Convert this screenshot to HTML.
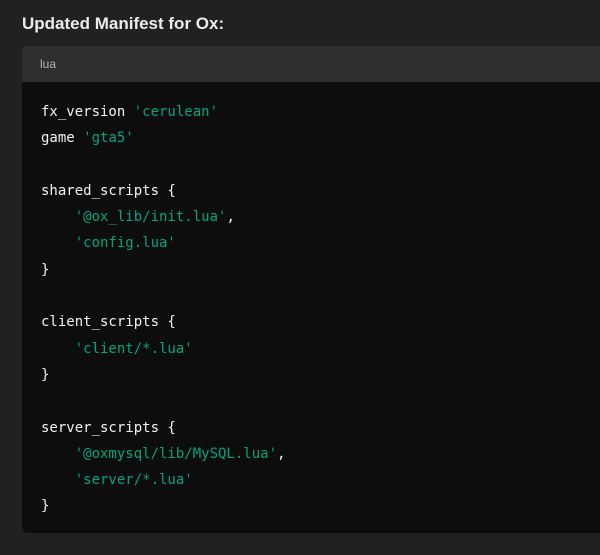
<!DOCTYPE html>
<html><head><meta charset="utf-8"><style>
html,body{margin:0;padding:0;background:#212121;width:600px;height:555px;overflow:hidden}
h3{position:absolute;left:22px;top:11px;margin:0;font:bold 17px/26px "Liberation Sans",sans-serif;color:#ececec}
.box{position:absolute;left:22px;top:46px;width:600px;height:487px;border-radius:6px;overflow:hidden;background:#0d0d0d}
.hd{height:36px;background:#2f2f2f;color:#b4b4b4;font:12px/36px "Liberation Sans",sans-serif;padding-left:18px}
pre{margin:0;position:absolute;left:19px;top:53px;font:14px/26.3px "DejaVu Sans Mono",monospace;color:#f3f3f3}
.s{color:#00a67d}
</style></head><body>
<h3>Updated Manifest for Ox:</h3>
<div class="box"><div class="hd">lua</div>
<pre>fx_version <span class="s">'cerulean'</span>
game <span class="s">'gta5'</span>

shared_scripts {
    <span class="s">'@ox_lib/init.lua'</span>,
    <span class="s">'config.lua'</span>
}

client_scripts {
    <span class="s">'client/*.lua'</span>
}

server_scripts {
    <span class="s">'@oxmysql/lib/MySQL.lua'</span>,
    <span class="s">'server/*.lua'</span>
}</pre></div>
</body></html>
